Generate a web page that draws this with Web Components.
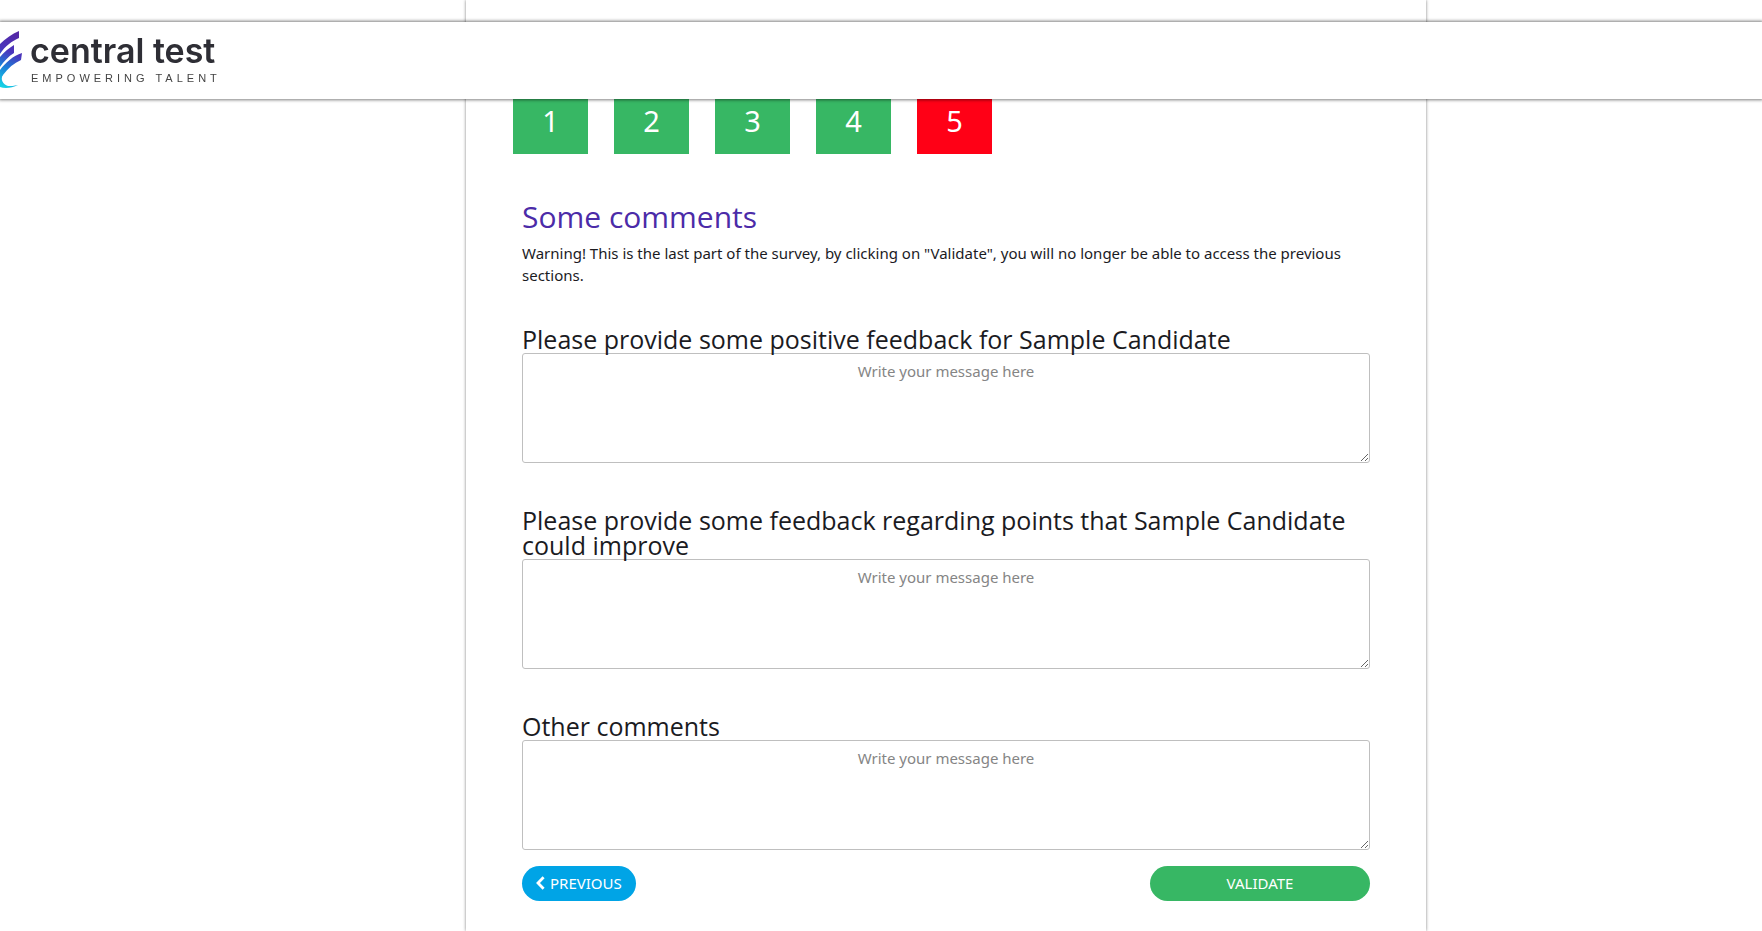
<!DOCTYPE html>
<html lang="en">
<head>
<meta charset="utf-8">
<title>Central Test – Survey</title>
<style>
  body {
    margin: 0;
    background: #fff;
    color: #1b1b1f;
    font: 15px/22px "Noto Sans", "Open Sans", sans-serif;
    --green: #37b764;
    --blue: #00a4e6;
    --red: #ff0016;
    --purple: #4b2ba8;
    --heading: "Open Sans", "Noto Sans", sans-serif;
  }
</style>
</head>
<body>
<survey-page></survey-page>

<script>
const define = (name, html) => {
  const template = document.createElement('template');
  template.innerHTML = html;
  customElements.define(name, class extends HTMLElement {
    constructor() {
      super();
      this.attachShadow({ mode: 'open' }).append(template.content.cloneNode(true));
    }
  });
};

define('brand-logo', `
  <style>
    :host { display: flex; align-items: flex-start; gap: 8px; }
    svg { display: block; width: 22px; height: 62px; flex: none; }
    .words { display: flex; flex-direction: column; padding-top: 4px; color: #2e2e35; white-space: nowrap; }
    .name { font: 600 34px/38px Inter, sans-serif; }
    .tag { font: 11px/16px "Liberation Sans", sans-serif; letter-spacing: 4px; padding-left: 1px; color: #444; }
  </style>
  <svg viewBox="0 0 22 62" aria-hidden="true">
    <defs>
      <linearGradient id="g" gradientUnits="userSpaceOnUse" x1="20" y1="8" x2="-3" y2="56">
        <stop offset="0" stop-color="#5428a6"/>
        <stop offset=".35" stop-color="#4a36bd"/>
        <stop offset=".65" stop-color="#1b7fd8"/>
        <stop offset="1" stop-color="#16d3e6"/>
      </linearGradient>
    </defs>
    <g fill="url(#g)">
      <path d="M19 3V10C12 13 5 18 0 26V16C5 11 12 6 19 3Z"/>
      <path d="M14 17V25C9 28 4 33 0 39V29C4 24 9 20 14 17Z"/>
      <path d="M22 25L21 32C14 35 8 40 3 47C2 48 1 50 0 51V42C6 34 13 28 22 25Z"/>
      <path d="M0 49L3 46C0 52 3 56 8 58C11 58 14 58 18 57C12 60 5 61 0 59Z"/>
    </g>
  </svg>
  <span class="words"><span class="name">central test</span><span class="tag">EMPOWERING TALENT</span></span>
`);

define('site-header', `
  <style>
    :host {
      display: block; position: fixed; z-index: 2; top: 22px; left: 0; right: 0;
      box-sizing: border-box; height: 77px; padding-top: 6px;
      background: #fff; box-shadow: 0 0 3px 1px rgba(0, 0, 0, .5);
    }
  </style>
  <slot></slot>
`);

define('step-tile', `
  <style>
    :host { display: block; }
    a {
      display: flex; align-items: center; justify-content: center; box-sizing: border-box;
      width: 75px; height: 75px; padding-top: 9px; background: var(--green); color: #fff;
      font-size: 29px; line-height: 40px; text-decoration: none;
    }
    :host([current]) a { background: var(--red); }
  </style>
  <a href="#"><slot></slot></a>
`);

define('survey-steps', `
  <style>
    :host { display: block; padding-left: 47px; }
    nav { display: flex; gap: 26px; }
  </style>
  <nav aria-label="Survey sections"><slot></slot></nav>
`);

define('comment-field', `
  <style>
    :host { display: block; }
    label {
      display: block; margin-bottom: 1px;
      font: 25px/25px var(--heading);
    }
    textarea {
      display: block; box-sizing: border-box; width: 100%; height: 110px; margin: 0;
      padding: 6px 8px; border: 1px solid #bfbfbf; border-radius: 3px; background: #fff;
      font: inherit; color: inherit; text-align: center; outline: none;
    }
    textarea::placeholder { color: #858585; opacity: 1; }
  </style>
  <label for="message"><slot></slot></label>
  <textarea id="message" placeholder="Write your message here"></textarea>
`);

define('pill-button', `
  <style>
    :host { display: block; }
    button {
      display: flex; align-items: center; justify-content: center; gap: 5px;
      height: 35px; padding: 0 14px 2px; border: 0; border-radius: 18px;
      background: var(--blue); color: #fff; font: inherit; text-transform: uppercase; cursor: pointer;
    }
    svg { display: none; width: 9px; height: 14px; }
    :host([back]) svg { display: block; }
    :host([primary]) button { background: var(--green); width: 220px; }
  </style>
  <button type="button">
    <svg viewBox="0 0 9 14" aria-hidden="true"><path d="M7.6 1.3L2 7L7.6 12.7" fill="none" stroke="#fff" stroke-width="2.8"/></svg>
    <slot></slot>
  </button>
`);

define('survey-page', `
  <style>
    :host { display: block; }
    .stage { padding-left: 130px; }
    .card {
      box-sizing: border-box; max-width: 960px; min-height: 100vh; margin: 0 auto;
      padding: 79px 0 28px; background: #fff; box-shadow: 0 0 3px rgba(0, 0, 0, .5);
    }
    .body { padding: 43px 56px 0; }
    h1 { margin: 0 0 5px; font: 30px/40px var(--heading); color: var(--purple); }
    p { margin: 0 0 41px; }
    .fields { display: flex; flex-direction: column; gap: 45px; }
    .actions { display: flex; justify-content: space-between; margin-top: 16px; }
  </style>
  <site-header><brand-logo></brand-logo></site-header>
  <div class="stage">
    <main class="card">
      <survey-steps>
        <step-tile>1</step-tile>
        <step-tile>2</step-tile>
        <step-tile>3</step-tile>
        <step-tile>4</step-tile>
        <step-tile current>5</step-tile>
      </survey-steps>
      <div class="body">
        <h1>Some comments</h1>
        <p>Warning! This is the last part of the survey, by clicking on "Validate", you will no longer be able to access the previous sections.</p>
        <div class="fields">
          <comment-field>Please provide some positive feedback for Sample Candidate</comment-field>
          <comment-field>Please provide some feedback regarding points that Sample Candidate could improve</comment-field>
          <comment-field>Other comments</comment-field>
        </div>
        <div class="actions">
          <pill-button back>Previous</pill-button>
          <pill-button primary>Validate</pill-button>
        </div>
      </div>
    </main>
  </div>
`);
</script>
</body>
</html>
